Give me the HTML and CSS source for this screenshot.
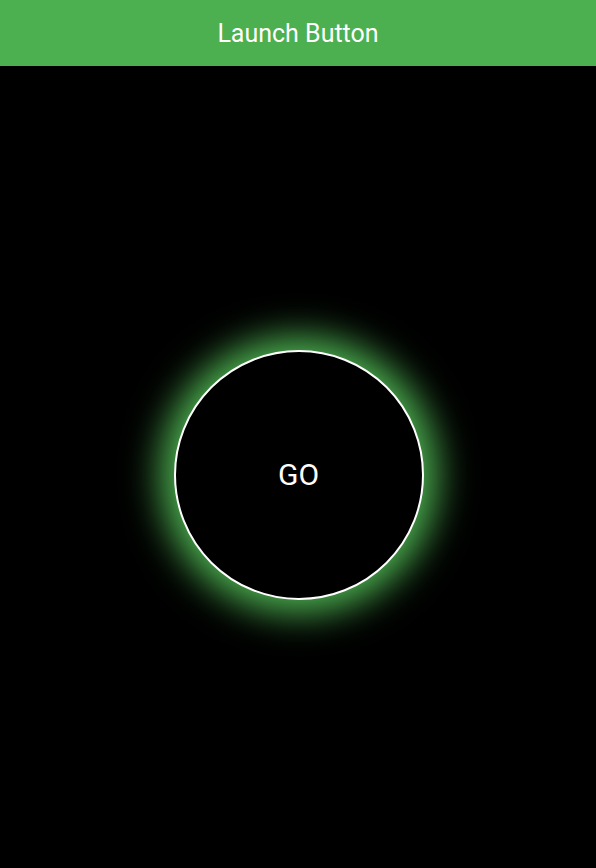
FILE: index.html
```html
<!DOCTYPE html>
<html>
<head>
<meta charset="utf-8">
<link rel="stylesheet" href="styles.css">
</head>
<body>
<header class="app-bar"><h1 class="title">Launch Button</h1></header>
<main class="content">
  <button class="launch">GO</button>
</main>
</body>
</html>
```
FILE: styles.css
```css
* { box-sizing: border-box; }
html, body { margin: 0; height: 100%; }
body {
  background: #000;
  font-family: Roboto, "Noto Sans", sans-serif;
  display: flex;
  flex-direction: column;
}
.app-bar {
  height: 66px;
  background: #4caf50;
  display: flex;
  align-items: center;
  justify-content: center;
  flex: none;
}
.title {
  margin: 0;
  color: #fff;
  font-size: 25px;
  font-weight: 400;
}
.content {
  flex: 1;
  display: flex;
  align-items: center;
  justify-content: center;
  padding-top: 15px;
}
.launch {
  width: 250px;
  height: 250px;
  border-radius: 50%;
  border: 2px solid #fff;
  background: #000;
  color: #fff;
  font-family: Roboto, sans-serif;
  font-size: 30px;
  padding: 0;
  margin-left: 1px;
  box-shadow: 0 0 36px 14px #4caf50;
}
```
